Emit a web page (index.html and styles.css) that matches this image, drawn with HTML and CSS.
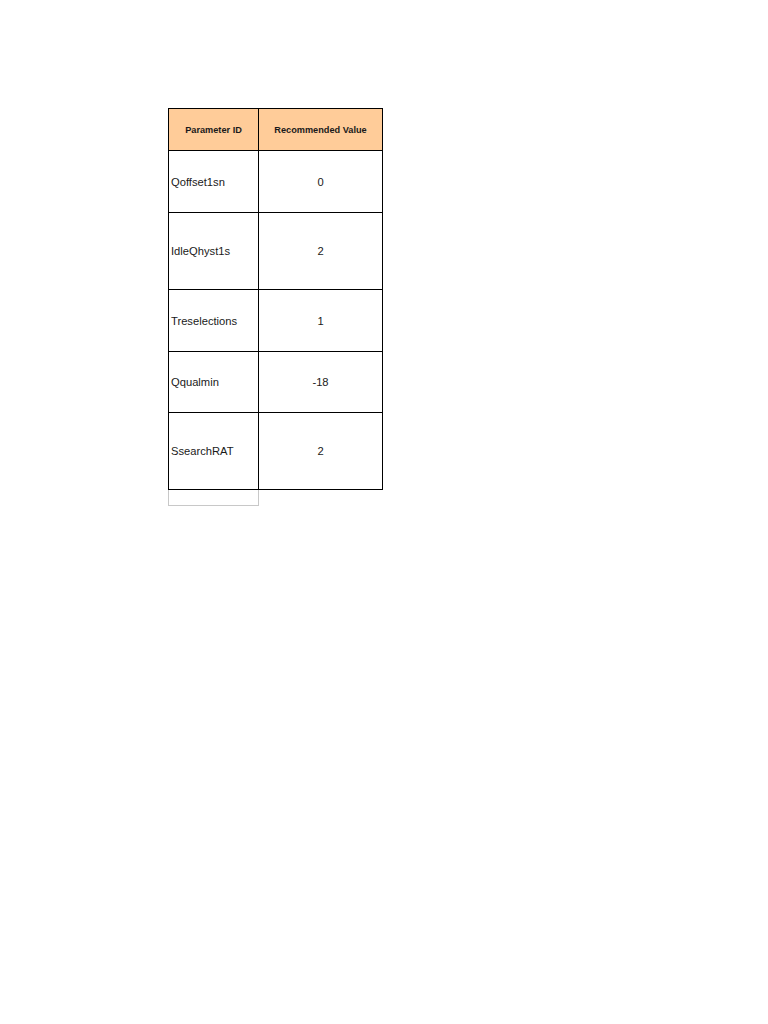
FILE: index.html
```html
<!DOCTYPE html>
<html>
<head>
<meta charset="utf-8">
<link rel="stylesheet" href="styles.css">
</head>
<body>
<div class="page">
  <table class="params">
    <colgroup><col class="c1"><col class="c2"></colgroup>
    <thead>
      <tr class="head"><th>Parameter ID</th><th>Recommended Value</th></tr>
    </thead>
    <tbody>
      <tr class="r62"><td class="name">Qoffset1sn</td><td class="val">0</td></tr>
      <tr class="r77"><td class="name">IdleQhyst1s</td><td class="val">2</td></tr>
      <tr class="r62"><td class="name">Treselections</td><td class="val">1</td></tr>
      <tr class="r61"><td class="name">Qqualmin</td><td class="val">-18</td></tr>
      <tr class="r77"><td class="name">SsearchRAT</td><td class="val">2</td></tr>
    </tbody>
  </table>
  <div class="empty"></div>
</div>
</body>
</html>
```
FILE: styles.css
```css
html, body {
  margin: 0;
  padding: 0;
  background: #ffffff;
}
.page {
  padding: 108px 0 0 168px;
  font-family: "Liberation Sans", Arial, sans-serif;
  color: #1a1a1a;
}
.params {
  border-collapse: collapse;
  table-layout: fixed;
  width: 214px;
}
.c1 { width: 90px; }
.c2 { width: 124px; }
.params th, .params td {
  border: 1px solid #000;
  padding: 0;
  vertical-align: middle;
}
.head th {
  background: #ffcc99;
  font-size: 9.2px;
  font-weight: bold;
  text-align: center;
  height: 41px;
}
.name {
  font-size: 11.2px;
  text-align: left;
  padding-left: 2px !important;
}
.val {
  font-size: 11.2px;
  text-align: center;
}
.r62 td { height: 61px; }
.r61 td { height: 60px; }
.r77 td { height: 76px; }
.empty {
  width: 89px;
  height: 15px;
  border: 1px solid #c8c8c8;
  border-top: none;
}
```
